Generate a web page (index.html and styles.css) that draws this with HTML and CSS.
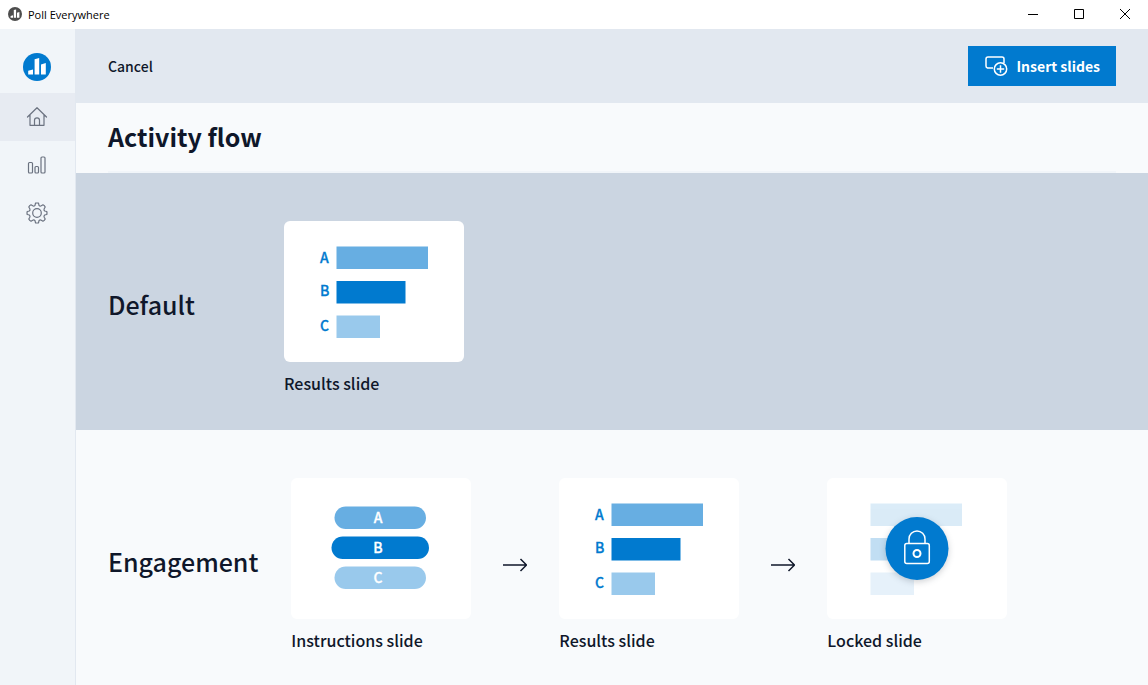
FILE: index.html
```html
<!DOCTYPE html>
<html lang="en">
<head>
<meta charset="utf-8">
<title>Poll Everywhere</title>
<link rel="stylesheet" href="styles.css">
</head>
<body>
<svg class="defs" aria-hidden="true">
  <symbol id="logo" viewBox="0 0 28 28">
    <circle cx="14" cy="14" r="14" fill="currentColor"/>
    <path d="M5.200 17.800l4.800-1.300v5H5.200zM11.600 6.200l4.600-1.200v16.500h-4.600zM18 11.400l4.800-1.300v11.400H18z" fill="#fff"/>
  </symbol>
  <symbol id="arrow" viewBox="0 0 24 24">
    <path d="M0 12h23.500M17.500 6l6 6-6 6" fill="none" stroke="currentColor" stroke-width="1.500"/>
  </symbol>
</svg>

<div class="titlebar">
  <svg class="titlebar-logo"><use href="#logo"/></svg>
  <span class="titlebar-name">Poll Everywhere</span>
  <button class="window-button" aria-label="Minimize"><svg viewBox="0 0 10 10"><path d="M0 5.500h10"/></svg></button>
  <button class="window-button" aria-label="Maximize"><svg viewBox="0 0 10 10"><path d="M.5.5h9v9h-9z"/></svg></button>
  <button class="window-button" aria-label="Close"><svg viewBox="0 0 10 10"><path d="M0 0l10 10M10 0L0 10"/></svg></button>
</div>

<div class="app">
  <nav class="sidebar" aria-label="Main">
    <svg class="brand" role="img" aria-label="Poll Everywhere"><use href="#logo"/></svg>
    <a class="nav-link active" href="#home" aria-label="Home">
      <svg viewBox="0 0 22 22"><path d="M1.500 11L11 1.700 20.500 11M4 9v10.300h14V9M8.500 19v-4.700a2.500 2.500 0 0 1 5 0V19"/></svg>
    </a>
    <a class="nav-link" href="#activities" aria-label="Activities">
      <svg viewBox="0 0 22 22"><rect x="2.500" y="8.500" width="4" height="10.500" rx="1"/><rect x="9" y="12.500" width="3.500" height="6.500" rx="1"/><rect x="15" y="3" width="4" height="16" rx="1"/></svg>
    </a>
    <a class="nav-link" href="#settings" aria-label="Settings">
      <svg viewBox="0 0 22 22"><circle cx="11" cy="11" r="4.300"/><path d="M9.500 1.200Q11 .8 12.500 1.200L13 3.300Q14 4.500 15.300 3.800L17 2.800Q18.500 3.600 19.200 5L18.200 6.700Q17.500 8 18.700 9L20.800 9.500Q21.200 11 20.800 12.500L18.700 13Q17.500 14 18.200 15.300L19.200 17Q18.500 18.500 17 19.200L15.300 18.200Q14 17.500 13 18.700L12.500 20.800Q11 21.200 9.500 20.800L9 18.700Q8 17.500 6.700 18.200L5 19.200Q3.500 18.500 2.800 17L3.800 15.300Q4.500 14 3.300 13L1.200 12.500Q.8 11 1.200 9.500L3.300 9Q4.500 8 3.800 6.700L2.800 5Q3.500 3.500 5 2.800L6.700 3.800Q8 4.500 9 3.300Z"/></svg>
    </a>
  </nav>

  <main class="main">
    <header class="toolbar">
      <button class="cancel">Cancel</button>
      <button class="insert">
        <svg viewBox="0 0 24 24"><path d="M9 14H3.500a2 2 0 0 1-1.500-2V5a2 2 0 0 1 2-2h14a2 2 0 0 1 2 2V9"/><circle cx="16.500" cy="15" r="6.200"/><path d="M16.500 11.300v7.400M12.800 15h7.400"/></svg>
        Insert slides
      </button>
    </header>

    <div class="heading"><h1>Activity flow</h1></div>

    <section class="flow selected">
      <h2>Default</h2>
      <figure class="slide">
        <svg class="preview" viewBox="0 0 180 141" role="img" aria-label="Results bars">
          <g class="letters"><text x="36" y="42">A</text><text x="36" y="75">B</text><text x="36" y="110">C</text></g>
          <rect class="mid" x="52.500" y="25.500" width="91.500" height="22.500"/>
          <rect class="deep" x="52.500" y="60" width="69" height="22.500"/>
          <rect class="pale" x="52.500" y="94.500" width="43.500" height="22.500"/>
        </svg>
        <figcaption>Results slide</figcaption>
      </figure>
    </section>

    <section class="flow">
      <h2>Engagement</h2>
      <figure class="slide">
        <svg class="preview" viewBox="0 0 180 141" role="img" aria-label="Answer choices">
          <rect class="mid" x="43.500" y="28.500" width="91.500" height="22.500" rx="11.250"/>
          <rect class="deep" x="40.500" y="58.500" width="97.500" height="22.500" rx="11.250"/>
          <rect class="pale" x="43.500" y="88.500" width="91.500" height="22.500" rx="11.250"/>
          <g class="letters white"><text x="87" y="45">A</text><text x="87" y="75">B</text><text x="87" y="105">C</text></g>
        </svg>
        <figcaption>Instructions slide</figcaption>
      </figure>
      <svg class="arrow" aria-hidden="true"><use href="#arrow"/></svg>
      <figure class="slide">
        <svg class="preview" viewBox="0 0 180 141" role="img" aria-label="Results bars">
          <g class="letters"><text x="36" y="42">A</text><text x="36" y="75">B</text><text x="36" y="110">C</text></g>
          <rect class="mid" x="52.500" y="25.500" width="91.500" height="22.500"/>
          <rect class="deep" x="52.500" y="60" width="69" height="22.500"/>
          <rect class="pale" x="52.500" y="94.500" width="43.500" height="22.500"/>
        </svg>
        <figcaption>Results slide</figcaption>
      </figure>
      <svg class="arrow" aria-hidden="true"><use href="#arrow"/></svg>
      <figure class="slide">
        <svg class="preview" viewBox="0 0 180 141" role="img" aria-label="Locked results">
          <g class="faded">
            <rect class="mid" x="43.500" y="25.500" width="91.500" height="22.500"/>
            <rect class="deep" x="43.500" y="60" width="69" height="22.500"/>
            <rect class="pale" x="43.500" y="94.500" width="43.500" height="22.500"/>
          </g>
          <circle class="deep badge" cx="90" cy="70.500" r="31.500"/>
          <g class="lock"><rect x="77.800" y="65.500" width="24.500" height="20" rx="2"/><path d="M82 65.500v-4.500a8 8 0 0 1 16 0v4.500"/><circle cx="90" cy="75.500" r="3.500" stroke-width="2"/></g>
        </svg>
        <figcaption>Locked slide</figcaption>
      </figure>
    </section>
  </main>
</div>
</body>
</html>
```
FILE: styles.css
```css
* { box-sizing: border-box; }

body {
  margin: 0;
  height: 100vh;
  display: flex;
  flex-direction: column;
  overflow: hidden;
  background: #f8fafc;
  color: #0f172a;
  font-family: "Noto Sans CJK SC", "Open Sans", sans-serif;
  font-size: 16px;
  font-weight: 500;
}

button {
  margin: 0;
  padding: 0;
  border: 0;
  background: none;
  color: inherit;
  font: inherit;
  cursor: pointer;
}

h1, h2, figure { margin: 0; }

.defs { position: absolute; width: 0; height: 0; }

.titlebar {
  flex: none;
  display: flex;
  align-items: center;
  height: 29px;
  padding-left: 8px;
  background: #fff;
  color: #000;
  font: 400 11px/16px "Open Sans", sans-serif;
}

.titlebar-logo { width: 14px; height: 14px; margin: 0 6px 2px 0; color: #4d4d4d; }
.titlebar-name { flex: 1; }

.window-button {
  display: flex;
  align-items: center;
  justify-content: center;
  width: 46px;
  height: 26px;
  padding-bottom: 2px;
}

.window-button svg {
  width: 10px;
  height: 10px;
  fill: none;
  stroke: #000;
  stroke-width: 1;
  overflow: visible;
}

.app { flex: 1; display: flex; min-height: 0; }

.sidebar {
  flex: none;
  width: 76px;
  display: flex;
  flex-direction: column;
  background: #f1f5f9;
  border-right: 1px solid #e2e8f0;
}

.brand {
  width: 28px;
  height: 28px;
  margin: 24px 24px 12px 23px;
  color: #017acf;
}

.nav-link {
  display: flex;
  align-items: center;
  height: 48px;
  padding-left: 26px;
  color: #6b7280;
}

.nav-link.active { background: #e7ebf2; }

.nav-link svg {
  width: 22px;
  height: 22px;
  fill: none;
  stroke: currentColor;
  stroke-width: 1.2;
  stroke-linejoin: round;
  stroke-linecap: round;
}

.main { flex: 1; min-width: 0; overflow: auto; scrollbar-width: none; }

.toolbar {
  display: flex;
  align-items: center;
  justify-content: space-between;
  padding: 17px 32px;
  background: #e2e8f0;
}

.cancel { font-size: 14px; line-height: 24px; }

.insert {
  display: flex;
  align-items: center;
  gap: 8px;
  height: 40px;
  padding: 0 16px;
  background: #017acf;
  color: #fff;
  font-size: 14px;
  font-weight: 700;
}

.insert svg { width: 24px; height: 24px; fill: none; stroke: #fff; stroke-width: 1.5; }

.heading { padding: 0 32px; }

.heading h1 {
  padding: 16px 0 18px;
  border-bottom: 2px solid #f1f5f9;
  font-size: 25px;
  line-height: 34px;
  font-weight: 700;
}

.flow {
  display: flex;
  align-items: center;
  gap: 32px;
  padding: 48px 32px 34px;
}

.flow.selected { background: #cbd5e1; }

.flow h2 {
  min-width: 144px;
  padding: 0 1px 10px 0;
  font-size: 25px;
  line-height: 36px;
  font-weight: 500;
}

.slide { flex: none; }

.preview {
  display: block;
  width: 180px;
  height: 141px;
  border-radius: 6px;
  background: #fff;
}

.slide figcaption { margin-top: 8px; font-size: 16px; line-height: 26px; }

.arrow { flex: none; width: 24px; height: 24px; margin-bottom: 2px; overflow: visible; }

.letters { fill: #017acf; font-size: 14px; font-weight: 500; stroke: #017acf; stroke-width: 0.3; }
.letters.white { fill: #fff; stroke: #fff; text-anchor: middle; }
.mid { fill: #67aee2; }
.deep { fill: #017acf; }
.pale { fill: #99c9ec; }
.faded { opacity: 0.24; }
.badge { filter: drop-shadow(0 2px 3px rgba(15, 23, 42, 0.2)); }
.lock { fill: none; stroke: #fff; stroke-width: 1.5; }
```
